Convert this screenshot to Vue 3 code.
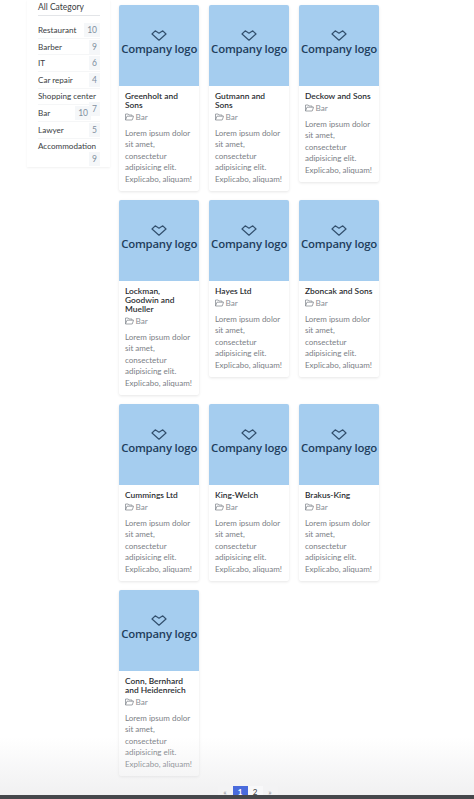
<template>
  <div class="page">
    <div class="layout">
      <aside class="sidebar">
        <div class="side-title">All Category</div>
        <ul class="cat-list">
          <li v-for="c in categories" :key="c.name" :class="['cat-row', { wrap: c.wrap, near: c.near }]">
            <span class="cat-name">{{ c.name }}</span>
            <span class="cat-count">{{ c.count }}</span>
          </li>
        </ul>
      </aside>

      <main class="content">
        <div class="grid">
          <div v-for="co in companies" :key="co" class="card">
            <div class="logo">
              <svg class="heart" width="16" height="11" viewBox="0 0 16 11" fill="none" stroke="#33506e" stroke-width="1.2" stroke-linejoin="round">
                <path d="M4.2 .8 L8 3.2 L11.8 .8 L15 4 L8 10.2 L1 4 Z" />
              </svg>
              <span class="logo-text">Company logo</span>
            </div>
            <div class="card-body">
              <h3 class="card-title">{{ co }}</h3>
              <div class="card-cat">
                <svg width="9" height="8" viewBox="0 0 9 8" fill="none" stroke="#8a8f96" stroke-width=".8">
                  <path d="M.5 7 V1 H3.2 L4 2 H7 V3.2 M.5 7 L2 3.2 H8.6 L7.2 7 Z" />
                </svg>
                <span>Bar</span>
              </div>
              <p class="card-text">Lorem ipsum dolor sit amet, consectetur adipisicing elit. Explicabo, aliquam!</p>
            </div>
          </div>
        </div>
        <div class="pager">
          <span class="pg">«</span>
          <span class="pg active">1</span>
          <span class="pg num">2</span>
          <span class="pg">»</span>
        </div>
      </main>
    </div>

    <div class="fade"></div>
    <div class="bottom-bar"></div>
  </div>
</template>

<script setup>
const categories = [
  { name: 'Restaurant', count: 10 },
  { name: 'Barber', count: 9 },
  { name: 'IT', count: 6 },
  { name: 'Car repair', count: 4 },
  { name: 'Shopping center', count: 7, wrap: true },
  { name: 'Bar', count: 10, near: true },
  { name: 'Lawyer', count: 5 },
  { name: 'Accommodation', count: 9, wrap: true },
]
const companies = [
  'Greenholt and Sons', 'Gutmann and Sons', 'Deckow and Sons',
  'Lockman, Goodwin and Mueller', 'Hayes Ltd', 'Zboncak and Sons',
  'Cummings Ltd', 'King-Welch', 'Brakus-King',
  'Conn, Bernhard and Heidenreich',
]
</script>

<style>
html, body { margin: 0; background: #fff; overflow: hidden; }
</style>

<style scoped>
.page { position: relative; height: 799px; overflow: hidden; font-family: "Lato", "Open Sans", sans-serif; color: #6d7278; }
.layout { display: flex; align-items: flex-start; padding-left: 27px; gap: 9px; }

.sidebar { width: 83px; box-sizing: border-box; padding: 0 10px 11px 11px; box-shadow: 0 1px 2px rgba(0, 0, 0, 0.06); }
.side-title { font-size: 8.5px; line-height: 15px; color: #3a3d42; border-bottom: 1px solid #e3e5e8; margin-bottom: 6px; }
.cat-list { list-style: none; margin: 0; padding: 0; }
.cat-row { display: flex; justify-content: space-between; align-items: center; box-sizing: border-box; height: 16.7px; font-size: 8.1px; color: #3a3d42; border-bottom: 1px solid #f5f6f7; }
.cat-row:last-child { border-bottom: 0; }
.cat-row.wrap { flex-wrap: wrap; align-content: flex-start; }
.cat-row.wrap .cat-name { width: 100%; line-height: 15px; white-space: nowrap; }
.cat-row.wrap .cat-count { margin-left: auto; margin-top: -2px; }
.cat-row.near { justify-content: flex-start; gap: 25px; }
.cat-count { font-size: 8.5px; color: #7f8f9f; background: #f5f7f9; padding: 1px 3px; line-height: 12px; }

.content { width: 257px; }
.grid { display: grid; grid-template-columns: repeat(3, 80.3px); column-gap: 9.7px; row-gap: 9px; align-items: start; padding-top: 5px; }
.card { background: #fff; border-radius: 2px; box-shadow: 0 1px 3px rgba(0, 0, 0, 0.1); }
.logo { height: 81px; background: #a5cdef; border-radius: 2px 2px 0 0; display: flex; flex-direction: column; align-items: center; justify-content: center; padding-bottom: 6px; box-sizing: border-box; }
.heart { display: block; }
.logo-text { font-family: "Open Sans", sans-serif; font-size: 11.4px; font-weight: 600; line-height: 15px; letter-spacing: -0.2px; color: #1f3d5c; white-space: nowrap; }
.card-body { padding: 6px 6px 6px 6px; }
.card-title { margin: 0; font-size: 8.4px; line-height: 9px; font-weight: 600; color: #2a2d31; }
.card-cat { display: flex; align-items: center; gap: 1.5px; margin-top: 1.5px; font-size: 8.2px; line-height: 11px; color: #8a8f96; }
.card-text { margin: 5px 0 0; font-size: 8px; line-height: 11.5px; color: #7b8086; }

.pager { position: relative; z-index: 1; display: flex; justify-content: center; align-items: center; margin-top: 10px; }
.pg { width: 15px; height: 14px; line-height: 12px; text-align: center; font-size: 8px; color: #8a8f96; background: #f3f3f4; }
.pg.active { background: #4a6bdc; color: #fff; font-weight: 700; }
.pg.num { color: #3a3d42; background: #f8f8f9; }

.fade { position: absolute; left: 0; right: 0; bottom: 4px; height: 58px; background: linear-gradient(to bottom, rgba(230, 230, 232, 0), rgba(226, 226, 228, 0.5)); pointer-events: none; }
.bottom-bar { position: absolute; z-index: 2; left: 0; right: 0; bottom: 0; height: 4px; background: #45474b; }
</style>
